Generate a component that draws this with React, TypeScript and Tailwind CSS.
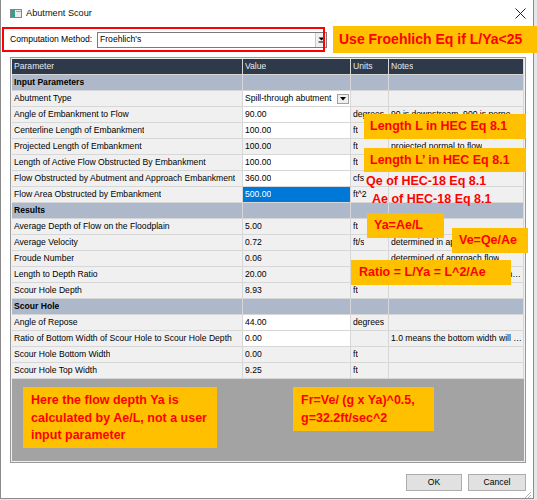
import React from 'react';

type Row =
  | { kind: 'section'; label: string }
  | {
      kind: 'row';
      label: string;
      value: string;
      units?: string;
      notes?: string;
      edit?: boolean;
      select?: boolean;
      selected?: boolean;
    };

const rows: Row[] = [
  { kind: 'section', label: 'Input Parameters' },
  { kind: 'row', label: 'Abutment Type', value: 'Spill-through abutment', select: true },
  { kind: 'row', label: 'Angle of Embankment to Flow', value: '90.00', edit: true, units: 'degrees', notes: '90 is downstream, 900 is perpendicular to flow' },
  { kind: 'row', label: 'Centerline Length of Embankment', value: '100.00', edit: true, units: 'ft' },
  { kind: 'row', label: 'Projected Length of Embankment', value: '100.00', units: 'ft', notes: 'projected normal to flow' },
  { kind: 'row', label: 'Length of Active Flow Obstructed By Embankment', value: '100.00', edit: true, units: 'ft' },
  { kind: 'row', label: 'Flow Obstructed by Abutment and Approach Embankment', value: '360.00', edit: true, units: 'cfs' },
  { kind: 'row', label: 'Flow Area Obstructed by Embankment', value: '500.00', selected: true, units: 'ft^2' },
  { kind: 'section', label: 'Results' },
  { kind: 'row', label: 'Average Depth of Flow on the Floodplain', value: '5.00', units: 'ft' },
  { kind: 'row', label: 'Average Velocity', value: '0.72', units: 'ft/s', notes: 'determined in approach flow' },
  { kind: 'row', label: 'Froude Number', value: '0.06', notes: 'determined of approach flow' },
  { kind: 'row', label: 'Length to Depth Ratio', value: '20.00', notes: 'Length of embankment to depth of flow ratio' },
  { kind: 'row', label: 'Scour Hole Depth', value: '8.93', units: 'ft' },
  { kind: 'section', label: 'Scour Hole' },
  { kind: 'row', label: 'Angle of Repose', value: '44.00', edit: true, units: 'degrees' },
  { kind: 'row', label: 'Ratio of Bottom Width of Scour Hole to Scour Hole Depth', value: '0.00', edit: true, notes: '1.0 means the bottom width will be equal to the depth' },
  { kind: 'row', label: 'Scour Hole Bottom Width', value: '0.00', units: 'ft' },
  { kind: 'row', label: 'Scour Hole Top Width', value: '9.25', units: 'ft' },
];

const ui = "font-['Liberation_Sans',Arial,sans-serif]";
const note = "font-['Liberation_Sans',Arial,sans-serif] font-bold text-[#ff0000]";

function DropArrow() {
  return (
    <svg width="7" height="7" viewBox="0 0 7 7">
      <path d="M0.5 1.5 H6.5 L3.5 4.5 Z" fill="#000" />
      <rect x="0.5" y="5.5" width="6" height="1" fill="#000" />
    </svg>
  );
}

function Cell({ w, className = '', children }: { w: string; className?: string; children?: React.ReactNode }) {
  return (
    <div className={`${w} h-full shrink-0 border-r border-b border-[#d7d7d7] pl-[2px] flex items-center overflow-hidden ${className}`}>
      <span className="truncate block">{children}</span>
    </div>
  );
}

function TableRow({ row }: { row: Row }) {
  if (row.kind === 'section') {
    return (
      <div className="flex h-[16px] bg-[#adb9ca]">
        <Cell w="w-[231px]" className="border-[#c7cfdb] font-bold">{row.label}</Cell>
        <Cell w="w-[108px]" className="border-[#c7cfdb]" />
        <Cell w="w-[38px]" className="border-[#c7cfdb]" />
        <Cell w="w-[135px]" className="border-[#c7cfdb]" />
      </div>
    );
  }
  let valueCell: React.ReactNode;
  if (row.select) {
    valueCell = (
      <div className="w-[108px] h-full shrink-0 border-r border-b border-[#d7d7d7] flex items-center bg-white pl-[2px] pr-[1px]">
        <span className="flex-1 truncate">{row.value}</span>
        <div className="w-[12px] h-[10px] border border-[#a0a0a0] bg-[#f0f0f0] flex items-center justify-center">
          <svg width="6" height="4" viewBox="0 0 6 4">
            <path d="M0 0 H6 L3 3.5 Z" fill="#000" />
          </svg>
        </div>
      </div>
    );
  } else if (row.selected) {
    valueCell = (
      <Cell w="w-[108px]" className="bg-[#0078d7] text-white">{row.value}</Cell>
    );
  } else {
    valueCell = (
      <Cell w="w-[108px]" className={row.edit ? 'bg-white' : 'bg-[#f0f0f0]'}>{row.value}</Cell>
    );
  }
  return (
    <div className="flex h-[16px] bg-[#f0f0f0]">
      <Cell w="w-[231px]">{row.label}</Cell>
      {valueCell}
      <Cell w="w-[38px]">{row.units}</Cell>
      <Cell w="w-[135px]">{row.notes}</Cell>
    </div>
  );
}

export default function App() {
  return (
    <div className={`relative w-[537px] h-[500px] overflow-hidden bg-[#e4e6ea] flex ${ui} text-[8.6px] text-black`}>
      <div className="w-[534px] h-[499px] bg-white border-l border-r border-b border-[#8c8c8c] flex flex-col">
        {/* title bar */}
        <div className="h-[27px] flex items-center pl-[9px] pr-[3px] shrink-0">
          <svg width="12" height="9" viewBox="0 0 12 9">
            <rect x="0.5" y="0.5" width="11" height="8" fill="#e8ecef" stroke="#7d8790" />
            <rect x="1" y="1" width="4" height="7" fill="#3f9a8c" />
            <rect x="6" y="2" width="5" height="1" fill="#9aa4ad" />
          </svg>
          <span className="ml-[4px] text-[9.2px] text-[#111]">Abutment Scour</span>
          <svg className="ml-auto mr-[4px]" width="11" height="11" viewBox="0 0 11 11">
            <path d="M0.5 0.5 L10.5 10.5 M10.5 0.5 L0.5 10.5" stroke="#222" strokeWidth="1" />
          </svg>
        </div>

        {/* computation method */}
        <div className="h-[25px] flex items-center pl-[9px] shrink-0">
          <span className="w-[87px]">Computation Method:</span>
          <div className="w-[230px] h-[16px] border border-[#7a7a7a] bg-white flex items-center">
            <span className="flex-1 pl-[2px]">Froehlich's</span>
            <div className="w-[11px] h-[14px] bg-[#f0f0f0] border-l border-[#c8c8c8] flex items-center justify-center">
              <DropArrow />
            </div>
          </div>
        </div>

        {/* parameter grid */}
        <div className="ml-[9px] mt-[5px] w-[516px] h-[406px] border border-[#999] bg-[#f0f0f0] p-[1px] flex flex-col shrink-0">
          <div className="flex h-[16px] bg-[#2e394a] text-[#e6e9ee]">
            <Cell w="w-[231px]" className="border-[#56606f]">Parameter</Cell>
            <Cell w="w-[108px]" className="border-[#56606f]">Value</Cell>
            <Cell w="w-[38px]" className="border-[#56606f]">Units</Cell>
            <Cell w="w-[135px]" className="border-[#56606f]">Notes</Cell>
          </div>
          {rows.map((r, i) => (
            <TableRow key={i} row={r} />
          ))}
          <div className="flex-1 bg-[#a3a3a3]" />
        </div>

        {/* buttons */}
        <div className="flex justify-end gap-[6px] pr-[7px] mt-[11px]">
          <button className="w-[56px] h-[17px] border border-[#adadad] bg-[#e1e1e1] text-[8.6px]">OK</button>
          <button className="w-[58px] h-[17px] border border-[#adadad] bg-[#e1e1e1] text-[8.6px]">Cancel</button>
        </div>
        <div className="flex-1 flex justify-end items-end pr-[1px] pb-[1px]">
          <svg width="8" height="8" viewBox="0 0 8 8">
            <path d="M7 1 L1 7 M7 4 L4 7 M7 6.5 L6.5 7" stroke="#b5b5b5" strokeWidth="1" />
          </svg>
        </div>
      </div>

      {/* annotations */}
      <div className="absolute left-[2px] top-[27px] w-[323px] h-[25px] border-2 border-[#ff0000]" />
      <div className={`absolute left-[333px] top-[26px] w-[210px] h-[27px] bg-[#ffc000] flex items-center pl-[6px] text-[14px] ${note}`}>
        Use Froehlich Eq if L/Ya&lt;25
      </div>
      <div className={`absolute left-[364px] top-[114px] w-[162px] h-[25px] bg-[#ffc000] flex items-center pl-[6px] text-[12.5px] ${note}`}>
        Length L in HEC Eq 8.1
      </div>
      <div className={`absolute left-[364px] top-[148px] w-[162px] h-[24px] bg-[#ffc000] flex items-center pl-[6px] text-[12.5px] ${note}`}>
        Length L’ in HEC Eq 8.1
      </div>
      <div className={`absolute left-[366px] top-[173px] text-[12.5px] leading-[16px] ${note}`}>Qe of HEC-18 Eq 8.1</div>
      <div className={`absolute left-[372px] top-[191px] text-[12.5px] leading-[16px] ${note}`}>Ae of HEC-18 Eq 8.1</div>
      <div className={`absolute left-[367px] top-[213px] w-[77px] h-[25px] bg-[#ffc000] flex items-center pl-[7px] text-[12.5px] ${note}`}>
        Ya=Ae/L
      </div>
      <div className={`absolute left-[452px] top-[228px] w-[76px] h-[25px] bg-[#ffc000] flex items-center pl-[7px] text-[12.5px] ${note}`}>
        Ve=Qe/Ae
      </div>
      <div className={`absolute left-[351px] top-[260px] w-[160px] h-[25px] bg-[#ffc000] flex items-center pl-[8px] text-[12.5px] ${note}`}>
        Ratio = L/Ya = L^2/Ae
      </div>
      <div className={`absolute left-[23px] top-[387px] w-[194px] h-[61px] bg-[#ffc000] pl-[8px] pt-[5px] text-[12.5px] leading-[17.5px] ${note}`}>
        Here the flow depth Ya is
        <br />
        calculated by Ae/L, not a user
        <br />
        input parameter
      </div>
      <div className={`absolute left-[293px] top-[387px] w-[141px] h-[44px] bg-[#ffc000] pl-[8px] pt-[5px] text-[12.5px] leading-[17.5px] ${note}`}>
        Fr=Ve/ (g x Ya)^0.5,
        <br />
        g=32.2ft/sec^2
      </div>
    </div>
  );
}
